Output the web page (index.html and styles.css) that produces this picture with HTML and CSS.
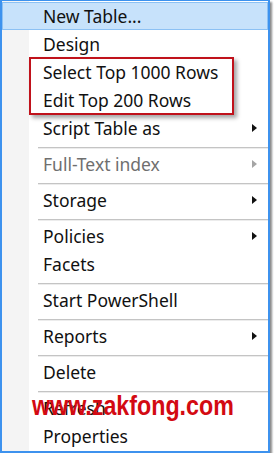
FILE: index.html
```html
<!DOCTYPE html>
<html lang="en">
<head>
  <meta charset="UTF-8" />
  <title>Table context menu</title>
  <link rel="stylesheet" href="styles.css">
</head>
<body>

  <div class="menu">
    <ul class="menu-list">
      <li class="item active">New Table...</li>
      <li class="item">Design</li>
      <li class="item">Select Top 1000 Rows</li>
      <li class="item">Edit Top 200 Rows</li>
      <li class="item">Script Table as <span class="arrow"></span></li>
      <li class="sep"></li>
      <li class="item disabled">Full-Text index <span class="arrow"></span></li>
      <li class="sep"></li>
      <li class="item">Storage <span class="arrow"></span></li>
      <li class="sep"></li>
      <li class="item">Policies <span class="arrow"></span></li>
      <li class="item">Facets</li>
      <li class="sep"></li>
      <li class="item">Start PowerShell</li>
      <li class="sep"></li>
      <li class="item">Reports <span class="arrow"></span></li>
      <li class="sep"></li>
      <li class="item">Delete</li>
      <li class="sep"></li>
      <li class="item">Refresh</li>
      <li class="item">Properties</li>
    </ul>

    <!-- red callout round the two row commands -->
    <div class="callout"></div>

    <div class="watermark">www.zakfong.com</div>
  </div>

</body>
</html>
```

FILE: styles.css
```css
body {
  margin: 0;
  background: #fff;
  font-family: 'Noto Sans', 'Open Sans', sans-serif;
}

.menu {
  position: relative;
  box-sizing: border-box;
  width: 270px;
  height: 453px;
  border: 2px solid #3d92ee;
  border-top-width: 1px;
  background: linear-gradient(to right, #f4f4f4 0, #f4f4f4 27px, #fff 27px);
  box-shadow: 2px 2px 2px #8a8a8a;
  padding: 1px 0 0 0;
}

.menu-list {
  list-style: none;
  margin: 0;
  padding: 0;
}

.item {
  display: flex;
  align-items: center;
  box-sizing: border-box;
  height: 28px;
  padding-left: 41px;
  padding-right: 11px;
  font-size: 17.5px;
  color: #111;
}

.item.active {
  background: #c7e2fb;
  border: 1px solid #8cc1f4;
  padding-left: 40px;
}

.item.disabled {
  color: #6f6f6f;
}

.arrow {
  margin-left: auto;
  width: 0;
  height: 0;
  border-top: 4px solid transparent;
  border-bottom: 4px solid transparent;
  border-left: 5px solid #111;
}

.disabled .arrow {
  border-left-color: #a5a5a5;
}

.sep {
  height: 8px;
  box-sizing: border-box;
  margin-left: 36px;
  padding-top: 5px;
}

.sep::before {
  content: "";
  display: block;
  height: 1px;
  background: #c4c4c4;
  border-bottom: 1px solid #ececec;
}

.callout {
  position: absolute;
  left: 27px;
  top: 56px;
  width: 201px;
  height: 54px;
  border: 2px solid #c0121b;
  box-shadow: 3px 3px 4px rgba(0, 0, 0, 0.35);
}

.watermark {
  position: absolute;
  left: 30px;
  top: 391px;
  font-family: 'Liberation Sans', Arial, sans-serif;
  font-weight: bold;
  font-size: 28px;
  line-height: 28px;
  color: #d30a12;
  white-space: nowrap;
  transform: scaleX(0.83);
  transform-origin: left top;
}
```
